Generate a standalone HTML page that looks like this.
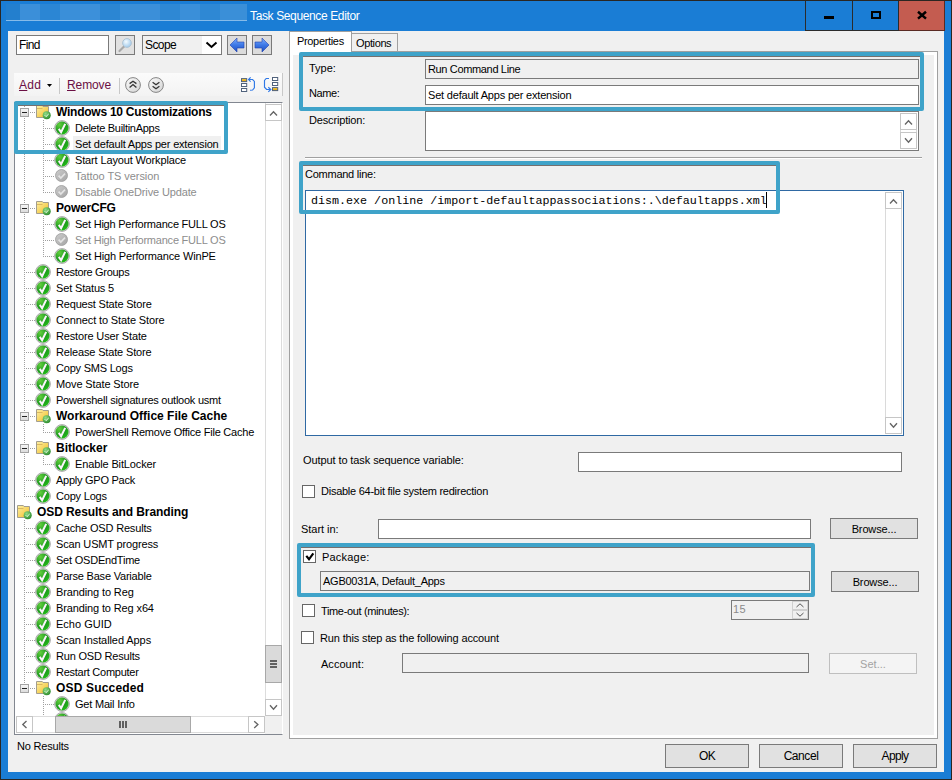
<!DOCTYPE html><html><head><meta charset="utf-8"><style>
html,body{margin:0;padding:0;}
body{width:952px;height:780px;position:relative;overflow:hidden;background:#2a2622;font-family:"Liberation Sans",sans-serif;}
.a{position:absolute;box-sizing:border-box;}
</style></head><body>
<div class="a" style="left:1px;top:1px;width:950px;height:778px;background:#1a7dd5;"></div>
<div class="a" style="left:6px;top:4px;width:14px;height:16px;background:#237fce;"></div>
<div class="a" style="left:20px;top:4px;width:20px;height:16px;background:#3b8fd9;"></div>
<div class="a" style="left:40px;top:4px;width:20px;height:16px;background:#2b86d4;"></div>
<div class="a" style="left:60px;top:4px;width:20px;height:16px;background:#3a8fd9;"></div>
<div class="a" style="left:80px;top:4px;width:20px;height:16px;background:#3c90da;"></div>
<div class="a" style="left:100px;top:4px;width:20px;height:16px;background:#2b86d3;"></div>
<div class="a" style="left:120px;top:4px;width:20px;height:16px;background:#3a8fd8;"></div>
<div class="a" style="left:140px;top:4px;width:20px;height:16px;background:#3b8fd9;"></div>
<div class="a" style="left:160px;top:4px;width:20px;height:16px;background:#2e88d4;"></div>
<div class="a" style="left:180px;top:4px;width:20px;height:16px;background:#3a8fd9;"></div>
<div class="a" style="left:200px;top:4px;width:20px;height:16px;background:#2e88d4;"></div>
<div class="a" style="left:220px;top:4px;width:20px;height:16px;background:#3a8fd8;"></div>
<div class="a" style="left:240px;top:4px;width:7px;height:16px;background:#3a8fd8;"></div>
<div class="a" style="left:6px;top:20px;width:241px;height:1px;background:#86bbe9;"></div>
<div class="a" style="left:250px;top:8.0px;height:16px;line-height:16px;font-size:12px;color:#fff;font-weight:normal;letter-spacing:-0.368px;font-family:'Liberation Sans';white-space:pre;">Task Sequence Editor</div>
<div class="a" style="left:805px;top:1px;width:1px;height:30px;background:#2b2b2b;"></div>
<div class="a" style="left:805px;top:30px;width:140px;height:1px;background:#2b2b2b;"></div>
<div class="a" style="left:852px;top:1px;width:1px;height:30px;background:#2b2b2b;"></div>
<div class="a" style="left:898px;top:1px;width:1px;height:30px;background:#2b2b2b;"></div>
<div class="a" style="left:899px;top:1px;width:45px;height:29px;background:#c45c50;"></div>
<div class="a" style="left:944px;top:1px;width:1px;height:30px;background:#5a2a24;"></div>
<div class="a" style="left:899px;top:30px;width:46px;height:1px;background:#5a2a24;"></div>
<div class="a" style="left:824px;top:16px;width:10px;height:3px;background:#000;"></div>
<div class="a" style="left:871px;top:11px;width:10px;height:8px;border:2px solid #000;"></div>
<svg class="a" style="left:916px;top:10px" width="12" height="10" viewBox="0 0 12 10"><path d="M2 1.8 L10 8.6 M10 1.8 L2 8.6" stroke="#000" stroke-width="2.5"/></svg>
<div class="a" style="left:8px;top:31px;width:936px;height:741px;background:#f0f0f0;"></div>
<div class="a" style="left:16px;top:35px;width:93px;height:20px;background:#fff;box-shadow:inset 0 0 0 1px #7a7a7a;"></div>
<div class="a" style="left:19px;top:37.0px;height:16px;line-height:16px;font-size:12px;color:#000;font-weight:normal;letter-spacing:-0.6px;font-family:'Liberation Sans';white-space:pre;">Find</div>
<div class="a" style="left:115px;top:35px;width:20px;height:20px;background:#e1e1e1;box-shadow:inset 0 0 0 1px #7a7a7a;"></div>
<svg class="a" style="left:117px;top:37px" width="16" height="16" viewBox="0 0 16 16">
<defs><radialGradient id="lens" cx="0.4" cy="0.35" r="0.7"><stop offset="0" stop-color="#f4fbff"/><stop offset="1" stop-color="#9cc7ea"/></radialGradient></defs>
<path d="M2.5 14 L7 9.5" stroke="#a8a8a8" stroke-width="2.2" stroke-linecap="round"/>
<circle cx="10" cy="6" r="4.4" fill="url(#lens)" stroke="#b0c4d4" stroke-width="1"/></svg>
<div class="a" style="left:142px;top:35px;width:80px;height:20px;background:#f0f0f0;box-shadow:inset 0 0 0 1px #7a7a7a;"></div>
<div class="a" style="left:202px;top:36px;width:19px;height:18px;background:#fff;"></div>
<div class="a" style="left:145px;top:37.0px;height:16px;line-height:16px;font-size:12px;color:#000;font-weight:normal;letter-spacing:-0.6px;font-family:'Liberation Sans';white-space:pre;">Scope</div>
<svg class="a" style="left:205px;top:41px" width="13" height="8" viewBox="0 0 13 8"><path d="M1.5 1.5 L6.5 6 L11.5 1.5" stroke="#000" stroke-width="2" fill="none"/></svg>
<div class="a" style="left:227px;top:35px;width:20px;height:20px;background:#dcdcdc;box-shadow:inset 0 0 0 1px #7a7a7a;"></div>
<div class="a" style="left:252px;top:35px;width:20px;height:20px;background:#dcdcdc;box-shadow:inset 0 0 0 1px #7a7a7a;"></div>
<svg class="a" style="left:229px;top:37px" width="17" height="16" viewBox="0 0 17 16">
<defs><linearGradient id="arw" x1="0" y1="0" x2="0" y2="1"><stop offset="0" stop-color="#7fb0ff"/><stop offset="0.5" stop-color="#3d78e6"/><stop offset="1" stop-color="#1f4fc0"/></linearGradient></defs>
<path d="M1 8 L8 1 L8 5 L15 5 L15 11 L8 11 L8 15 Z" fill="url(#arw)" stroke="#1e3fb0" stroke-width="0.6"/></svg>
<svg class="a" style="left:253px;top:37px" width="17" height="16" viewBox="0 0 17 16">
<path d="M16 8 L9 1 L9 5 L2 5 L2 11 L9 11 L9 15 Z" fill="url(#arw)" stroke="#1e3fb0" stroke-width="0.6"/></svg>
<div class="a" style="left:14px;top:73px;width:269px;height:23px;background:linear-gradient(#fbfbfb,#f3f3f3);border-right:1px solid #c8c8c8;"></div>
<div class="a" style="left:19px;top:77.0px;height:16px;line-height:16px;font-size:12px;color:#6b0f44;font-weight:normal;letter-spacing:0.3px;font-family:'Liberation Sans';white-space:pre;"><u>A</u>dd</div>
<svg class="a" style="left:47px;top:84px" width="5" height="3"><path d="M0 0 L5 0 L2.5 3Z" fill="#000"/></svg>
<div class="a" style="left:59px;top:78px;width:1px;height:16px;background:#c8c8c8;"></div>
<div class="a" style="left:67px;top:77.0px;height:16px;line-height:16px;font-size:12px;color:#6b0f44;font-weight:normal;letter-spacing:-0.1px;font-family:'Liberation Sans';white-space:pre;"><u>R</u>emove</div>
<div class="a" style="left:119px;top:78px;width:1px;height:16px;background:#c8c8c8;"></div>
<svg class="a" style="left:125px;top:77px" width="16" height="16" viewBox="0 0 16 16">
<defs><linearGradient id="cg125" x1="0" y1="0" x2="1" y2="1"><stop offset="0" stop-color="#fafafa"/><stop offset="1" stop-color="#d4d4d4"/></linearGradient></defs>
<circle cx="8" cy="8" r="7.4" fill="url(#cg125)" stroke="#858585" stroke-width="1"/>
<path d="M4.6 6.6 L8 4.2 L11.4 6.6 M4.6 10.6 L8 7.6 L11.4 10.6" stroke="#333" stroke-width="1.3" fill="none"/></svg>
<svg class="a" style="left:148px;top:77px" width="16" height="16" viewBox="0 0 16 16">
<defs><linearGradient id="cg148" x1="0" y1="0" x2="1" y2="1"><stop offset="0" stop-color="#fafafa"/><stop offset="1" stop-color="#d4d4d4"/></linearGradient></defs>
<circle cx="8" cy="8" r="7.4" fill="url(#cg148)" stroke="#858585" stroke-width="1"/>
<path d="M4.6 5.2 L8 7.8 L11.4 5.2 M4.6 9.2 L8 11.8 L11.4 9.2" stroke="#333" stroke-width="1.3" fill="none"/></svg>
<svg class="a" style="left:240px;top:76px" width="17" height="17" viewBox="0 0 17 17">
<defs><linearGradient id="gor" x1="0" y1="0" x2="0" y2="1"><stop offset="0" stop-color="#ffd84a"/><stop offset="1" stop-color="#e39a00"/></linearGradient></defs>
<rect x="1.5" y="2.6" width="5.2" height="3" fill="url(#gor)" stroke="#50627c" stroke-width="1"/>
<rect x="1.5" y="7.5" width="5.2" height="3" fill="#fff" stroke="#50627c" stroke-width="1"/>
<rect x="1.5" y="12.5" width="5.2" height="3" fill="#fff" stroke="#50627c" stroke-width="1"/>
<path d="M8.8 3.5 L12.6 3.5 L14.4 5.4 L14.4 11.9 L12.6 14 L10 14.2" stroke="#2f78e6" stroke-width="1.15" fill="none"/>
<path d="M10.6 1.3 L8.5 3.5 L10.6 5.7" stroke="#2f78e6" stroke-width="1.15" fill="none"/></svg>
<svg class="a" style="left:262px;top:76px" width="17" height="17" viewBox="0 0 17 17">
<rect x="10.5" y="1.5" width="5.2" height="3" fill="#fff" stroke="#50627c" stroke-width="1"/>
<rect x="10.5" y="6.5" width="5.2" height="3" fill="#fff" stroke="#50627c" stroke-width="1"/>
<rect x="10.5" y="11.6" width="5.2" height="3" fill="url(#gor)" stroke="#50627c" stroke-width="1"/>
<path d="M7 2.5 L4.2 2.5 L2.5 4.5 L2.5 11.2 L4.6 13.5 L8.6 13.5" stroke="#2f78e6" stroke-width="1.15" fill="none"/>
<path d="M6.3 11.3 L8.8 13.5 L6.3 15.8" stroke="#2f78e6" stroke-width="1.15" fill="none"/></svg>
<div class="a" style="left:14px;top:102px;width:269px;height:633px;background:#fff;border:1px solid #828790;border-right:1px solid #fff;"></div>
<svg width="0" height="0" style="position:absolute"><defs>
<radialGradient id="gck" cx="0.3" cy="0.25" r="0.85"><stop offset="0" stop-color="#62cf3e"/><stop offset="0.6" stop-color="#1f9a1f"/><stop offset="1" stop-color="#22c414"/></radialGradient>
<linearGradient id="gdis" x1="0" y1="0" x2="1" y2="1"><stop offset="0" stop-color="#cdcdcd"/><stop offset="1" stop-color="#a4a4a4"/></linearGradient>
<linearGradient id="gfold" x1="0" y1="0" x2="1" y2="1"><stop offset="0" stop-color="#fdf0a8"/><stop offset="0.6" stop-color="#f7d25a"/><stop offset="1" stop-color="#eaa820"/></linearGradient>
<radialGradient id="gbadge" cx="0.35" cy="0.3" r="0.75"><stop offset="0" stop-color="#92dc86"/><stop offset="1" stop-color="#2a8a2a"/></radialGradient>
</defs></svg>
<div class="a" style="left:24px;top:104px;width:1px;height:393px;background:repeating-linear-gradient(to bottom,#a0a0a0 0 1px,transparent 1px 2px);"></div>
<div class="a" style="left:24px;top:520px;width:1px;height:169px;background:repeating-linear-gradient(to bottom,#a0a0a0 0 1px,transparent 1px 2px);"></div>
<div class="a" style="left:43px;top:120px;width:1px;height:73px;background:repeating-linear-gradient(to bottom,#a0a0a0 0 1px,transparent 1px 2px);"></div>
<div class="a" style="left:43px;top:216px;width:1px;height:41px;background:repeating-linear-gradient(to bottom,#a0a0a0 0 1px,transparent 1px 2px);"></div>
<div class="a" style="left:43px;top:424px;width:1px;height:9px;background:repeating-linear-gradient(to bottom,#a0a0a0 0 1px,transparent 1px 2px);"></div>
<div class="a" style="left:43px;top:456px;width:1px;height:9px;background:repeating-linear-gradient(to bottom,#a0a0a0 0 1px,transparent 1px 2px);"></div>
<div class="a" style="left:43px;top:696px;width:1px;height:20px;background:repeating-linear-gradient(to bottom,#a0a0a0 0 1px,transparent 1px 2px);"></div>
<div class="a" style="left:30px;top:112px;width:6px;height:1px;background:repeating-linear-gradient(to right,#a0a0a0 0 1px,transparent 1px 2px);"></div>
<svg class="a" style="left:36px;top:104px" width="16" height="16" viewBox="0 0 16 16">
<path d="M0.5 1.5 L6.3 1.5 L7 2.5 L12.5 2.5 L12.5 13.5 L0.5 13.5 Z" fill="url(#gfold)" stroke="#a39e8e" stroke-width="1"/>
<path d="M1 4.5 L6.5 4.5" stroke="#d9b860" stroke-width="1"/>
<circle cx="10.7" cy="11.3" r="4" fill="url(#gbadge)"/>
<path d="M8.7 11.2 L10 12.6 L12.7 10" stroke="#e8ffe8" stroke-width="1" fill="none"/></svg>
<div class="a" style="left:20px;top:108px;width:9px;height:9px;border:1px solid #a3a3a3;background:linear-gradient(#f6f6f6,#dcdcdc);"></div><div class="a" style="left:22px;top:112px;width:5px;height:1px;background:#222;"></div>
<div class="a" style="left:56px;top:104.0px;height:16px;line-height:16px;font-size:12px;color:#000;font-weight:bold;letter-spacing:-0.25px;font-family:'Liberation Sans';white-space:pre;">Windows 10 Customizations</div>
<div class="a" style="left:45px;top:128px;width:9px;height:1px;background:repeating-linear-gradient(to right,#a0a0a0 0 1px,transparent 1px 2px);"></div>
<svg class="a" style="left:54px;top:120px" width="16" height="16" viewBox="0 0 16 16">
<circle cx="8" cy="8" r="7.4" fill="#d2d2d2" stroke="#a6a6a6" stroke-width="0.9"/>
<circle cx="8" cy="8" r="6.5" fill="url(#gck)"/>
<path d="M4.8 8.9 L7.1 12.3 L11.2 3.9" stroke="#fbf4fb" stroke-width="2" fill="none"/></svg>
<div class="a" style="left:75px;top:120.0px;height:16px;line-height:16px;font-size:11px;color:#000;font-weight:normal;letter-spacing:-0.294px;font-family:'Liberation Sans';white-space:pre;">Delete BuiltinApps</div>
<div class="a" style="left:45px;top:144px;width:9px;height:1px;background:repeating-linear-gradient(to right,#a0a0a0 0 1px,transparent 1px 2px);"></div>
<svg class="a" style="left:54px;top:136px" width="16" height="16" viewBox="0 0 16 16">
<circle cx="8" cy="8" r="7.4" fill="#d2d2d2" stroke="#a6a6a6" stroke-width="0.9"/>
<circle cx="8" cy="8" r="6.5" fill="url(#gck)"/>
<path d="M4.8 8.9 L7.1 12.3 L11.2 3.9" stroke="#fbf4fb" stroke-width="2" fill="none"/></svg>
<div class="a" style="left:73px;top:136px;width:148px;height:14px;background:#f0f0f0;"></div>
<div class="a" style="left:75px;top:136.0px;height:16px;line-height:16px;font-size:11px;color:#000;font-weight:normal;letter-spacing:-0.19px;font-family:'Liberation Sans';white-space:pre;">Set default Apps per extension</div>
<div class="a" style="left:45px;top:160px;width:9px;height:1px;background:repeating-linear-gradient(to right,#a0a0a0 0 1px,transparent 1px 2px);"></div>
<svg class="a" style="left:54px;top:152px" width="16" height="16" viewBox="0 0 16 16">
<circle cx="8" cy="8" r="7.4" fill="#d2d2d2" stroke="#a6a6a6" stroke-width="0.9"/>
<circle cx="8" cy="8" r="6.5" fill="url(#gck)"/>
<path d="M4.8 8.9 L7.1 12.3 L11.2 3.9" stroke="#fbf4fb" stroke-width="2" fill="none"/></svg>
<div class="a" style="left:75px;top:152.0px;height:16px;line-height:16px;font-size:11px;color:#000;font-weight:normal;letter-spacing:-0.143px;font-family:'Liberation Sans';white-space:pre;">Start Layout Workplace</div>
<div class="a" style="left:45px;top:176px;width:9px;height:1px;background:repeating-linear-gradient(to right,#a0a0a0 0 1px,transparent 1px 2px);"></div>
<svg class="a" style="left:54px;top:168px" width="16" height="16" viewBox="0 0 16 16">
<circle cx="7.5" cy="7.5" r="6" fill="url(#gdis)" stroke="#9a9a9a" stroke-width="0.8"/>
<path d="M4.6 7.6 L6.8 10 L11 5.6" stroke="#e4e4e4" stroke-width="1.7" fill="none"/></svg>
<div class="a" style="left:75px;top:168.0px;height:16px;line-height:16px;font-size:11px;color:#8d8d8d;font-weight:normal;letter-spacing:-0.062px;font-family:'Liberation Sans';white-space:pre;">Tattoo TS version</div>
<div class="a" style="left:45px;top:192px;width:9px;height:1px;background:repeating-linear-gradient(to right,#a0a0a0 0 1px,transparent 1px 2px);"></div>
<svg class="a" style="left:54px;top:184px" width="16" height="16" viewBox="0 0 16 16">
<circle cx="7.5" cy="7.5" r="6" fill="url(#gdis)" stroke="#9a9a9a" stroke-width="0.8"/>
<path d="M4.6 7.6 L6.8 10 L11 5.6" stroke="#e4e4e4" stroke-width="1.7" fill="none"/></svg>
<div class="a" style="left:75px;top:184.0px;height:16px;line-height:16px;font-size:11px;color:#8d8d8d;font-weight:normal;letter-spacing:-0.136px;font-family:'Liberation Sans';white-space:pre;">Disable OneDrive Update</div>
<div class="a" style="left:30px;top:208px;width:6px;height:1px;background:repeating-linear-gradient(to right,#a0a0a0 0 1px,transparent 1px 2px);"></div>
<svg class="a" style="left:36px;top:200px" width="16" height="16" viewBox="0 0 16 16">
<path d="M0.5 1.5 L6.3 1.5 L7 2.5 L12.5 2.5 L12.5 13.5 L0.5 13.5 Z" fill="url(#gfold)" stroke="#a39e8e" stroke-width="1"/>
<path d="M1 4.5 L6.5 4.5" stroke="#d9b860" stroke-width="1"/>
<circle cx="10.7" cy="11.3" r="4" fill="url(#gbadge)"/>
<path d="M8.7 11.2 L10 12.6 L12.7 10" stroke="#e8ffe8" stroke-width="1" fill="none"/></svg>
<div class="a" style="left:20px;top:204px;width:9px;height:9px;border:1px solid #a3a3a3;background:linear-gradient(#f6f6f6,#dcdcdc);"></div><div class="a" style="left:22px;top:208px;width:5px;height:1px;background:#222;"></div>
<div class="a" style="left:56px;top:200.0px;height:16px;line-height:16px;font-size:12px;color:#000;font-weight:bold;letter-spacing:-0.214px;font-family:'Liberation Sans';white-space:pre;">PowerCFG</div>
<div class="a" style="left:45px;top:224px;width:9px;height:1px;background:repeating-linear-gradient(to right,#a0a0a0 0 1px,transparent 1px 2px);"></div>
<svg class="a" style="left:54px;top:216px" width="16" height="16" viewBox="0 0 16 16">
<circle cx="8" cy="8" r="7.4" fill="#d2d2d2" stroke="#a6a6a6" stroke-width="0.9"/>
<circle cx="8" cy="8" r="6.5" fill="url(#gck)"/>
<path d="M4.8 8.9 L7.1 12.3 L11.2 3.9" stroke="#fbf4fb" stroke-width="2" fill="none"/></svg>
<div class="a" style="left:75px;top:216.0px;height:16px;line-height:16px;font-size:11px;color:#000;font-weight:normal;letter-spacing:-0.222px;font-family:'Liberation Sans';white-space:pre;">Set High Performance FULL OS</div>
<div class="a" style="left:45px;top:240px;width:9px;height:1px;background:repeating-linear-gradient(to right,#a0a0a0 0 1px,transparent 1px 2px);"></div>
<svg class="a" style="left:54px;top:232px" width="16" height="16" viewBox="0 0 16 16">
<circle cx="7.5" cy="7.5" r="6" fill="url(#gdis)" stroke="#9a9a9a" stroke-width="0.8"/>
<path d="M4.6 7.6 L6.8 10 L11 5.6" stroke="#e4e4e4" stroke-width="1.7" fill="none"/></svg>
<div class="a" style="left:75px;top:232.0px;height:16px;line-height:16px;font-size:11px;color:#8d8d8d;font-weight:normal;letter-spacing:-0.222px;font-family:'Liberation Sans';white-space:pre;">Set High Performance FULL OS</div>
<div class="a" style="left:45px;top:256px;width:9px;height:1px;background:repeating-linear-gradient(to right,#a0a0a0 0 1px,transparent 1px 2px);"></div>
<svg class="a" style="left:54px;top:248px" width="16" height="16" viewBox="0 0 16 16">
<circle cx="8" cy="8" r="7.4" fill="#d2d2d2" stroke="#a6a6a6" stroke-width="0.9"/>
<circle cx="8" cy="8" r="6.5" fill="url(#gck)"/>
<path d="M4.8 8.9 L7.1 12.3 L11.2 3.9" stroke="#fbf4fb" stroke-width="2" fill="none"/></svg>
<div class="a" style="left:75px;top:248.0px;height:16px;line-height:16px;font-size:11px;color:#000;font-weight:normal;letter-spacing:-0.16px;font-family:'Liberation Sans';white-space:pre;">Set High Performance WinPE</div>
<div class="a" style="left:26px;top:272px;width:9px;height:1px;background:repeating-linear-gradient(to right,#a0a0a0 0 1px,transparent 1px 2px);"></div>
<svg class="a" style="left:35px;top:264px" width="16" height="16" viewBox="0 0 16 16">
<circle cx="8" cy="8" r="7.4" fill="#d2d2d2" stroke="#a6a6a6" stroke-width="0.9"/>
<circle cx="8" cy="8" r="6.5" fill="url(#gck)"/>
<path d="M4.8 8.9 L7.1 12.3 L11.2 3.9" stroke="#fbf4fb" stroke-width="2" fill="none"/></svg>
<div class="a" style="left:56px;top:264.0px;height:16px;line-height:16px;font-size:11px;color:#000;font-weight:normal;letter-spacing:-0.308px;font-family:'Liberation Sans';white-space:pre;">Restore Groups</div>
<div class="a" style="left:26px;top:288px;width:9px;height:1px;background:repeating-linear-gradient(to right,#a0a0a0 0 1px,transparent 1px 2px);"></div>
<svg class="a" style="left:35px;top:280px" width="16" height="16" viewBox="0 0 16 16">
<circle cx="8" cy="8" r="7.4" fill="#d2d2d2" stroke="#a6a6a6" stroke-width="0.9"/>
<circle cx="8" cy="8" r="6.5" fill="url(#gck)"/>
<path d="M4.8 8.9 L7.1 12.3 L11.2 3.9" stroke="#fbf4fb" stroke-width="2" fill="none"/></svg>
<div class="a" style="left:56px;top:280.0px;height:16px;line-height:16px;font-size:11px;color:#000;font-weight:normal;letter-spacing:-0.155px;font-family:'Liberation Sans';white-space:pre;">Set Status 5</div>
<div class="a" style="left:26px;top:304px;width:9px;height:1px;background:repeating-linear-gradient(to right,#a0a0a0 0 1px,transparent 1px 2px);"></div>
<svg class="a" style="left:35px;top:296px" width="16" height="16" viewBox="0 0 16 16">
<circle cx="8" cy="8" r="7.4" fill="#d2d2d2" stroke="#a6a6a6" stroke-width="0.9"/>
<circle cx="8" cy="8" r="6.5" fill="url(#gck)"/>
<path d="M4.8 8.9 L7.1 12.3 L11.2 3.9" stroke="#fbf4fb" stroke-width="2" fill="none"/></svg>
<div class="a" style="left:56px;top:296.0px;height:16px;line-height:16px;font-size:11px;color:#000;font-weight:normal;letter-spacing:-0.183px;font-family:'Liberation Sans';white-space:pre;">Request State Store</div>
<div class="a" style="left:26px;top:320px;width:9px;height:1px;background:repeating-linear-gradient(to right,#a0a0a0 0 1px,transparent 1px 2px);"></div>
<svg class="a" style="left:35px;top:312px" width="16" height="16" viewBox="0 0 16 16">
<circle cx="8" cy="8" r="7.4" fill="#d2d2d2" stroke="#a6a6a6" stroke-width="0.9"/>
<circle cx="8" cy="8" r="6.5" fill="url(#gck)"/>
<path d="M4.8 8.9 L7.1 12.3 L11.2 3.9" stroke="#fbf4fb" stroke-width="2" fill="none"/></svg>
<div class="a" style="left:56px;top:312.0px;height:16px;line-height:16px;font-size:11px;color:#000;font-weight:normal;letter-spacing:-0.129px;font-family:'Liberation Sans';white-space:pre;">Connect to State Store</div>
<div class="a" style="left:26px;top:336px;width:9px;height:1px;background:repeating-linear-gradient(to right,#a0a0a0 0 1px,transparent 1px 2px);"></div>
<svg class="a" style="left:35px;top:328px" width="16" height="16" viewBox="0 0 16 16">
<circle cx="8" cy="8" r="7.4" fill="#d2d2d2" stroke="#a6a6a6" stroke-width="0.9"/>
<circle cx="8" cy="8" r="6.5" fill="url(#gck)"/>
<path d="M4.8 8.9 L7.1 12.3 L11.2 3.9" stroke="#fbf4fb" stroke-width="2" fill="none"/></svg>
<div class="a" style="left:56px;top:328.0px;height:16px;line-height:16px;font-size:11px;color:#000;font-weight:normal;letter-spacing:-0.153px;font-family:'Liberation Sans';white-space:pre;">Restore User State</div>
<div class="a" style="left:26px;top:352px;width:9px;height:1px;background:repeating-linear-gradient(to right,#a0a0a0 0 1px,transparent 1px 2px);"></div>
<svg class="a" style="left:35px;top:344px" width="16" height="16" viewBox="0 0 16 16">
<circle cx="8" cy="8" r="7.4" fill="#d2d2d2" stroke="#a6a6a6" stroke-width="0.9"/>
<circle cx="8" cy="8" r="6.5" fill="url(#gck)"/>
<path d="M4.8 8.9 L7.1 12.3 L11.2 3.9" stroke="#fbf4fb" stroke-width="2" fill="none"/></svg>
<div class="a" style="left:56px;top:344.0px;height:16px;line-height:16px;font-size:11px;color:#000;font-weight:normal;letter-spacing:-0.156px;font-family:'Liberation Sans';white-space:pre;">Release State Store</div>
<div class="a" style="left:26px;top:368px;width:9px;height:1px;background:repeating-linear-gradient(to right,#a0a0a0 0 1px,transparent 1px 2px);"></div>
<svg class="a" style="left:35px;top:360px" width="16" height="16" viewBox="0 0 16 16">
<circle cx="8" cy="8" r="7.4" fill="#d2d2d2" stroke="#a6a6a6" stroke-width="0.9"/>
<circle cx="8" cy="8" r="6.5" fill="url(#gck)"/>
<path d="M4.8 8.9 L7.1 12.3 L11.2 3.9" stroke="#fbf4fb" stroke-width="2" fill="none"/></svg>
<div class="a" style="left:56px;top:360.0px;height:16px;line-height:16px;font-size:11px;color:#000;font-weight:normal;letter-spacing:-0.217px;font-family:'Liberation Sans';white-space:pre;">Copy SMS Logs</div>
<div class="a" style="left:26px;top:384px;width:9px;height:1px;background:repeating-linear-gradient(to right,#a0a0a0 0 1px,transparent 1px 2px);"></div>
<svg class="a" style="left:35px;top:376px" width="16" height="16" viewBox="0 0 16 16">
<circle cx="8" cy="8" r="7.4" fill="#d2d2d2" stroke="#a6a6a6" stroke-width="0.9"/>
<circle cx="8" cy="8" r="6.5" fill="url(#gck)"/>
<path d="M4.8 8.9 L7.1 12.3 L11.2 3.9" stroke="#fbf4fb" stroke-width="2" fill="none"/></svg>
<div class="a" style="left:56px;top:376.0px;height:16px;line-height:16px;font-size:11px;color:#000;font-weight:normal;letter-spacing:-0.127px;font-family:'Liberation Sans';white-space:pre;">Move State Store</div>
<div class="a" style="left:26px;top:400px;width:9px;height:1px;background:repeating-linear-gradient(to right,#a0a0a0 0 1px,transparent 1px 2px);"></div>
<svg class="a" style="left:35px;top:392px" width="16" height="16" viewBox="0 0 16 16">
<circle cx="8" cy="8" r="7.4" fill="#d2d2d2" stroke="#a6a6a6" stroke-width="0.9"/>
<circle cx="8" cy="8" r="6.5" fill="url(#gck)"/>
<path d="M4.8 8.9 L7.1 12.3 L11.2 3.9" stroke="#fbf4fb" stroke-width="2" fill="none"/></svg>
<div class="a" style="left:56px;top:392.0px;height:16px;line-height:16px;font-size:11px;color:#000;font-weight:normal;letter-spacing:-0.242px;font-family:'Liberation Sans';white-space:pre;">Powershell signatures outlook usmt</div>
<div class="a" style="left:30px;top:416px;width:6px;height:1px;background:repeating-linear-gradient(to right,#a0a0a0 0 1px,transparent 1px 2px);"></div>
<svg class="a" style="left:36px;top:408px" width="16" height="16" viewBox="0 0 16 16">
<path d="M0.5 1.5 L6.3 1.5 L7 2.5 L12.5 2.5 L12.5 13.5 L0.5 13.5 Z" fill="url(#gfold)" stroke="#a39e8e" stroke-width="1"/>
<path d="M1 4.5 L6.5 4.5" stroke="#d9b860" stroke-width="1"/>
<circle cx="10.7" cy="11.3" r="4" fill="url(#gbadge)"/>
<path d="M8.7 11.2 L10 12.6 L12.7 10" stroke="#e8ffe8" stroke-width="1" fill="none"/></svg>
<div class="a" style="left:20px;top:412px;width:9px;height:9px;border:1px solid #a3a3a3;background:linear-gradient(#f6f6f6,#dcdcdc);"></div><div class="a" style="left:22px;top:416px;width:5px;height:1px;background:#222;"></div>
<div class="a" style="left:56px;top:408.0px;height:16px;line-height:16px;font-size:12px;color:#000;font-weight:bold;letter-spacing:0.0px;font-family:'Liberation Sans';white-space:pre;">Workaround Office File Cache</div>
<div class="a" style="left:45px;top:432px;width:9px;height:1px;background:repeating-linear-gradient(to right,#a0a0a0 0 1px,transparent 1px 2px);"></div>
<svg class="a" style="left:54px;top:424px" width="16" height="16" viewBox="0 0 16 16">
<circle cx="8" cy="8" r="7.4" fill="#d2d2d2" stroke="#a6a6a6" stroke-width="0.9"/>
<circle cx="8" cy="8" r="6.5" fill="url(#gck)"/>
<path d="M4.8 8.9 L7.1 12.3 L11.2 3.9" stroke="#fbf4fb" stroke-width="2" fill="none"/></svg>
<div class="a" style="left:75px;top:424.0px;height:16px;line-height:16px;font-size:11px;color:#000;font-weight:normal;letter-spacing:-0.224px;font-family:'Liberation Sans';white-space:pre;">PowerShell Remove Office File Cache</div>
<div class="a" style="left:30px;top:448px;width:6px;height:1px;background:repeating-linear-gradient(to right,#a0a0a0 0 1px,transparent 1px 2px);"></div>
<svg class="a" style="left:36px;top:440px" width="16" height="16" viewBox="0 0 16 16">
<path d="M0.5 1.5 L6.3 1.5 L7 2.5 L12.5 2.5 L12.5 13.5 L0.5 13.5 Z" fill="url(#gfold)" stroke="#a39e8e" stroke-width="1"/>
<path d="M1 4.5 L6.5 4.5" stroke="#d9b860" stroke-width="1"/>
<circle cx="10.7" cy="11.3" r="4" fill="url(#gbadge)"/>
<path d="M8.7 11.2 L10 12.6 L12.7 10" stroke="#e8ffe8" stroke-width="1" fill="none"/></svg>
<div class="a" style="left:20px;top:444px;width:9px;height:9px;border:1px solid #a3a3a3;background:linear-gradient(#f6f6f6,#dcdcdc);"></div><div class="a" style="left:22px;top:448px;width:5px;height:1px;background:#222;"></div>
<div class="a" style="left:56px;top:440.0px;height:16px;line-height:16px;font-size:12px;color:#000;font-weight:bold;letter-spacing:0.0px;font-family:'Liberation Sans';white-space:pre;">Bitlocker</div>
<div class="a" style="left:45px;top:464px;width:9px;height:1px;background:repeating-linear-gradient(to right,#a0a0a0 0 1px,transparent 1px 2px);"></div>
<svg class="a" style="left:54px;top:456px" width="16" height="16" viewBox="0 0 16 16">
<circle cx="8" cy="8" r="7.4" fill="#d2d2d2" stroke="#a6a6a6" stroke-width="0.9"/>
<circle cx="8" cy="8" r="6.5" fill="url(#gck)"/>
<path d="M4.8 8.9 L7.1 12.3 L11.2 3.9" stroke="#fbf4fb" stroke-width="2" fill="none"/></svg>
<div class="a" style="left:75px;top:456.0px;height:16px;line-height:16px;font-size:11px;color:#000;font-weight:normal;letter-spacing:-0.133px;font-family:'Liberation Sans';white-space:pre;">Enable BitLocker</div>
<div class="a" style="left:26px;top:480px;width:9px;height:1px;background:repeating-linear-gradient(to right,#a0a0a0 0 1px,transparent 1px 2px);"></div>
<svg class="a" style="left:35px;top:472px" width="16" height="16" viewBox="0 0 16 16">
<circle cx="8" cy="8" r="7.4" fill="#d2d2d2" stroke="#a6a6a6" stroke-width="0.9"/>
<circle cx="8" cy="8" r="6.5" fill="url(#gck)"/>
<path d="M4.8 8.9 L7.1 12.3 L11.2 3.9" stroke="#fbf4fb" stroke-width="2" fill="none"/></svg>
<div class="a" style="left:56px;top:472.0px;height:16px;line-height:16px;font-size:11px;color:#000;font-weight:normal;letter-spacing:-0.254px;font-family:'Liberation Sans';white-space:pre;">Apply GPO Pack</div>
<div class="a" style="left:26px;top:496px;width:9px;height:1px;background:repeating-linear-gradient(to right,#a0a0a0 0 1px,transparent 1px 2px);"></div>
<svg class="a" style="left:35px;top:488px" width="16" height="16" viewBox="0 0 16 16">
<circle cx="8" cy="8" r="7.4" fill="#d2d2d2" stroke="#a6a6a6" stroke-width="0.9"/>
<circle cx="8" cy="8" r="6.5" fill="url(#gck)"/>
<path d="M4.8 8.9 L7.1 12.3 L11.2 3.9" stroke="#fbf4fb" stroke-width="2" fill="none"/></svg>
<div class="a" style="left:56px;top:488.0px;height:16px;line-height:16px;font-size:11px;color:#000;font-weight:normal;letter-spacing:-0.2px;font-family:'Liberation Sans';white-space:pre;">Copy Logs</div>
<svg class="a" style="left:17px;top:504px" width="16" height="16" viewBox="0 0 16 16">
<path d="M0.5 1.5 L6.3 1.5 L7 2.5 L12.5 2.5 L12.5 13.5 L0.5 13.5 Z" fill="url(#gfold)" stroke="#a39e8e" stroke-width="1"/>
<path d="M1 4.5 L6.5 4.5" stroke="#d9b860" stroke-width="1"/>
<circle cx="10.7" cy="11.3" r="4" fill="url(#gbadge)"/>
<path d="M8.7 11.2 L10 12.6 L12.7 10" stroke="#e8ffe8" stroke-width="1" fill="none"/></svg>
<div class="a" style="left:37px;top:504.0px;height:16px;line-height:16px;font-size:12px;color:#000;font-weight:bold;letter-spacing:-0.087px;font-family:'Liberation Sans';white-space:pre;">OSD Results and Branding</div>
<div class="a" style="left:26px;top:528px;width:9px;height:1px;background:repeating-linear-gradient(to right,#a0a0a0 0 1px,transparent 1px 2px);"></div>
<svg class="a" style="left:35px;top:520px" width="16" height="16" viewBox="0 0 16 16">
<circle cx="8" cy="8" r="7.4" fill="#d2d2d2" stroke="#a6a6a6" stroke-width="0.9"/>
<circle cx="8" cy="8" r="6.5" fill="url(#gck)"/>
<path d="M4.8 8.9 L7.1 12.3 L11.2 3.9" stroke="#fbf4fb" stroke-width="2" fill="none"/></svg>
<div class="a" style="left:56px;top:520.0px;height:16px;line-height:16px;font-size:11px;color:#000;font-weight:normal;letter-spacing:-0.162px;font-family:'Liberation Sans';white-space:pre;">Cache OSD Results</div>
<div class="a" style="left:26px;top:544px;width:9px;height:1px;background:repeating-linear-gradient(to right,#a0a0a0 0 1px,transparent 1px 2px);"></div>
<svg class="a" style="left:35px;top:536px" width="16" height="16" viewBox="0 0 16 16">
<circle cx="8" cy="8" r="7.4" fill="#d2d2d2" stroke="#a6a6a6" stroke-width="0.9"/>
<circle cx="8" cy="8" r="6.5" fill="url(#gck)"/>
<path d="M4.8 8.9 L7.1 12.3 L11.2 3.9" stroke="#fbf4fb" stroke-width="2" fill="none"/></svg>
<div class="a" style="left:56px;top:536.0px;height:16px;line-height:16px;font-size:11px;color:#000;font-weight:normal;letter-spacing:-0.153px;font-family:'Liberation Sans';white-space:pre;">Scan USMT progress</div>
<div class="a" style="left:26px;top:560px;width:9px;height:1px;background:repeating-linear-gradient(to right,#a0a0a0 0 1px,transparent 1px 2px);"></div>
<svg class="a" style="left:35px;top:552px" width="16" height="16" viewBox="0 0 16 16">
<circle cx="8" cy="8" r="7.4" fill="#d2d2d2" stroke="#a6a6a6" stroke-width="0.9"/>
<circle cx="8" cy="8" r="6.5" fill="url(#gck)"/>
<path d="M4.8 8.9 L7.1 12.3 L11.2 3.9" stroke="#fbf4fb" stroke-width="2" fill="none"/></svg>
<div class="a" style="left:56px;top:552.0px;height:16px;line-height:16px;font-size:11px;color:#000;font-weight:normal;letter-spacing:-0.215px;font-family:'Liberation Sans';white-space:pre;">Set OSDEndTime</div>
<div class="a" style="left:26px;top:576px;width:9px;height:1px;background:repeating-linear-gradient(to right,#a0a0a0 0 1px,transparent 1px 2px);"></div>
<svg class="a" style="left:35px;top:568px" width="16" height="16" viewBox="0 0 16 16">
<circle cx="8" cy="8" r="7.4" fill="#d2d2d2" stroke="#a6a6a6" stroke-width="0.9"/>
<circle cx="8" cy="8" r="6.5" fill="url(#gck)"/>
<path d="M4.8 8.9 L7.1 12.3 L11.2 3.9" stroke="#fbf4fb" stroke-width="2" fill="none"/></svg>
<div class="a" style="left:56px;top:568.0px;height:16px;line-height:16px;font-size:11px;color:#000;font-weight:normal;letter-spacing:-0.206px;font-family:'Liberation Sans';white-space:pre;">Parse Base Variable</div>
<div class="a" style="left:26px;top:592px;width:9px;height:1px;background:repeating-linear-gradient(to right,#a0a0a0 0 1px,transparent 1px 2px);"></div>
<svg class="a" style="left:35px;top:584px" width="16" height="16" viewBox="0 0 16 16">
<circle cx="8" cy="8" r="7.4" fill="#d2d2d2" stroke="#a6a6a6" stroke-width="0.9"/>
<circle cx="8" cy="8" r="6.5" fill="url(#gck)"/>
<path d="M4.8 8.9 L7.1 12.3 L11.2 3.9" stroke="#fbf4fb" stroke-width="2" fill="none"/></svg>
<div class="a" style="left:56px;top:584.0px;height:16px;line-height:16px;font-size:11px;color:#000;font-weight:normal;letter-spacing:-0.121px;font-family:'Liberation Sans';white-space:pre;">Branding to Reg</div>
<div class="a" style="left:26px;top:608px;width:9px;height:1px;background:repeating-linear-gradient(to right,#a0a0a0 0 1px,transparent 1px 2px);"></div>
<svg class="a" style="left:35px;top:600px" width="16" height="16" viewBox="0 0 16 16">
<circle cx="8" cy="8" r="7.4" fill="#d2d2d2" stroke="#a6a6a6" stroke-width="0.9"/>
<circle cx="8" cy="8" r="6.5" fill="url(#gck)"/>
<path d="M4.8 8.9 L7.1 12.3 L11.2 3.9" stroke="#fbf4fb" stroke-width="2" fill="none"/></svg>
<div class="a" style="left:56px;top:600.0px;height:16px;line-height:16px;font-size:11px;color:#000;font-weight:normal;letter-spacing:-0.128px;font-family:'Liberation Sans';white-space:pre;">Branding to Reg x64</div>
<div class="a" style="left:26px;top:624px;width:9px;height:1px;background:repeating-linear-gradient(to right,#a0a0a0 0 1px,transparent 1px 2px);"></div>
<svg class="a" style="left:35px;top:616px" width="16" height="16" viewBox="0 0 16 16">
<circle cx="8" cy="8" r="7.4" fill="#d2d2d2" stroke="#a6a6a6" stroke-width="0.9"/>
<circle cx="8" cy="8" r="6.5" fill="url(#gck)"/>
<path d="M4.8 8.9 L7.1 12.3 L11.2 3.9" stroke="#fbf4fb" stroke-width="2" fill="none"/></svg>
<div class="a" style="left:56px;top:616.0px;height:16px;line-height:16px;font-size:11px;color:#000;font-weight:normal;letter-spacing:0.0px;font-family:'Liberation Sans';white-space:pre;">Echo GUID</div>
<div class="a" style="left:26px;top:640px;width:9px;height:1px;background:repeating-linear-gradient(to right,#a0a0a0 0 1px,transparent 1px 2px);"></div>
<svg class="a" style="left:35px;top:632px" width="16" height="16" viewBox="0 0 16 16">
<circle cx="8" cy="8" r="7.4" fill="#d2d2d2" stroke="#a6a6a6" stroke-width="0.9"/>
<circle cx="8" cy="8" r="6.5" fill="url(#gck)"/>
<path d="M4.8 8.9 L7.1 12.3 L11.2 3.9" stroke="#fbf4fb" stroke-width="2" fill="none"/></svg>
<div class="a" style="left:56px;top:632.0px;height:16px;line-height:16px;font-size:11px;color:#000;font-weight:normal;letter-spacing:-0.083px;font-family:'Liberation Sans';white-space:pre;">Scan Installed Apps</div>
<div class="a" style="left:26px;top:656px;width:9px;height:1px;background:repeating-linear-gradient(to right,#a0a0a0 0 1px,transparent 1px 2px);"></div>
<svg class="a" style="left:35px;top:648px" width="16" height="16" viewBox="0 0 16 16">
<circle cx="8" cy="8" r="7.4" fill="#d2d2d2" stroke="#a6a6a6" stroke-width="0.9"/>
<circle cx="8" cy="8" r="6.5" fill="url(#gck)"/>
<path d="M4.8 8.9 L7.1 12.3 L11.2 3.9" stroke="#fbf4fb" stroke-width="2" fill="none"/></svg>
<div class="a" style="left:56px;top:648.0px;height:16px;line-height:16px;font-size:11px;color:#000;font-weight:normal;letter-spacing:-0.2px;font-family:'Liberation Sans';white-space:pre;">Run OSD Results</div>
<div class="a" style="left:26px;top:672px;width:9px;height:1px;background:repeating-linear-gradient(to right,#a0a0a0 0 1px,transparent 1px 2px);"></div>
<svg class="a" style="left:35px;top:664px" width="16" height="16" viewBox="0 0 16 16">
<circle cx="8" cy="8" r="7.4" fill="#d2d2d2" stroke="#a6a6a6" stroke-width="0.9"/>
<circle cx="8" cy="8" r="6.5" fill="url(#gck)"/>
<path d="M4.8 8.9 L7.1 12.3 L11.2 3.9" stroke="#fbf4fb" stroke-width="2" fill="none"/></svg>
<div class="a" style="left:56px;top:664.0px;height:16px;line-height:16px;font-size:11px;color:#000;font-weight:normal;letter-spacing:-0.267px;font-family:'Liberation Sans';white-space:pre;">Restart Computer</div>
<div class="a" style="left:30px;top:688px;width:6px;height:1px;background:repeating-linear-gradient(to right,#a0a0a0 0 1px,transparent 1px 2px);"></div>
<svg class="a" style="left:36px;top:680px" width="16" height="16" viewBox="0 0 16 16">
<path d="M0.5 1.5 L6.3 1.5 L7 2.5 L12.5 2.5 L12.5 13.5 L0.5 13.5 Z" fill="url(#gfold)" stroke="#a39e8e" stroke-width="1"/>
<path d="M1 4.5 L6.5 4.5" stroke="#d9b860" stroke-width="1"/>
<circle cx="10.7" cy="11.3" r="4" fill="url(#gbadge)"/>
<path d="M8.7 11.2 L10 12.6 L12.7 10" stroke="#e8ffe8" stroke-width="1" fill="none"/></svg>
<div class="a" style="left:20px;top:684px;width:9px;height:9px;border:1px solid #a3a3a3;background:linear-gradient(#f6f6f6,#dcdcdc);"></div><div class="a" style="left:22px;top:688px;width:5px;height:1px;background:#222;"></div>
<div class="a" style="left:56px;top:680.0px;height:16px;line-height:16px;font-size:12px;color:#000;font-weight:bold;letter-spacing:0.173px;font-family:'Liberation Sans';white-space:pre;">OSD Succeded</div>
<div class="a" style="left:45px;top:704px;width:9px;height:1px;background:repeating-linear-gradient(to right,#a0a0a0 0 1px,transparent 1px 2px);"></div>
<svg class="a" style="left:54px;top:696px" width="16" height="16" viewBox="0 0 16 16">
<circle cx="8" cy="8" r="7.4" fill="#d2d2d2" stroke="#a6a6a6" stroke-width="0.9"/>
<circle cx="8" cy="8" r="6.5" fill="url(#gck)"/>
<path d="M4.8 8.9 L7.1 12.3 L11.2 3.9" stroke="#fbf4fb" stroke-width="2" fill="none"/></svg>
<div class="a" style="left:75px;top:696.0px;height:16px;line-height:16px;font-size:11px;color:#000;font-weight:normal;letter-spacing:-0.2px;font-family:'Liberation Sans';white-space:pre;">Get Mail Info</div>
<div class="a" style="left:45px;top:720px;width:9px;height:1px;background:repeating-linear-gradient(to right,#a0a0a0 0 1px,transparent 1px 2px);"></div>
<svg class="a" style="left:54px;top:712px" width="16" height="16" viewBox="0 0 16 16">
<circle cx="8" cy="8" r="7.4" fill="#d2d2d2" stroke="#a6a6a6" stroke-width="0.9"/>
<circle cx="8" cy="8" r="6.5" fill="url(#gck)"/>
<path d="M4.8 8.9 L7.1 12.3 L11.2 3.9" stroke="#fbf4fb" stroke-width="2" fill="none"/></svg>
<div class="a" style="left:75px;top:712.0px;height:16px;line-height:16px;font-size:11px;color:#000;font-weight:normal;letter-spacing:-0.25px;font-family:'Liberation Sans';white-space:pre;">Send mail</div>
<div class="a" style="left:265px;top:103px;width:17px;height:613px;background:#fff;"></div>
<div class="a" style="left:265px;top:103px;width:1px;height:613px;background:#dcdcdc;"></div>
<div class="a" style="left:281px;top:103px;width:1px;height:613px;background:#dcdcdc;"></div>
<div class="a" style="left:265px;top:104px;width:17px;height:17px;background:#fff;box-shadow:inset 0 0 0 1px #c6c6c6;"></div>
<svg class="a" style="left:265px;top:104px" width="17" height="17" viewBox="0 0 17 17"><path d="M5 11.5 L8.5 7.8 L12 11.5" stroke="#656565" stroke-width="1.35" fill="none"/></svg>
<div class="a" style="left:265px;top:645px;width:17px;height:38px;background:#dadada;box-shadow:inset 0 0 0 1px #a8a8a8;"></div>
<div class="a" style="left:270px;top:660px;width:7px;height:2px;background:#606060;"></div>
<div class="a" style="left:270px;top:663px;width:7px;height:2px;background:#606060;"></div>
<div class="a" style="left:270px;top:666px;width:7px;height:2px;background:#606060;"></div>
<div class="a" style="left:265px;top:699px;width:17px;height:17px;background:#fff;box-shadow:inset 0 0 0 1px #c6c6c6;"></div>
<svg class="a" style="left:265px;top:699px" width="17" height="17" viewBox="0 0 17 17"><path d="M5 6.3 L8.5 10.2 L12 6.3" stroke="#656565" stroke-width="1.35" fill="none"/></svg>
<div class="a" style="left:16px;top:716px;width:249px;height:17px;background:#fff;"></div>
<div class="a" style="left:16px;top:716px;width:249px;height:1px;background:#dcdcdc;"></div>
<div class="a" style="left:16px;top:732px;width:249px;height:1px;background:#dcdcdc;"></div>
<div class="a" style="left:16px;top:716px;width:17px;height:17px;background:#fff;box-shadow:inset 0 0 0 1px #c6c6c6;"></div>
<svg class="a" style="left:16px;top:716px" width="17" height="17" viewBox="0 0 17 17"><path d="M10.5 5 L6.8 8.5 L10.5 12" stroke="#656565" stroke-width="1.35" fill="none"/></svg>
<div class="a" style="left:55px;top:716px;width:136px;height:17px;background:#dadada;box-shadow:inset 0 0 0 1px #a8a8a8;"></div>
<div class="a" style="left:119px;top:721px;width:2px;height:7px;background:#606060;"></div>
<div class="a" style="left:122px;top:721px;width:2px;height:7px;background:#606060;"></div>
<div class="a" style="left:125px;top:721px;width:2px;height:7px;background:#606060;"></div>
<div class="a" style="left:248px;top:716px;width:17px;height:17px;background:#fff;box-shadow:inset 0 0 0 1px #c6c6c6;"></div>
<svg class="a" style="left:248px;top:716px" width="17" height="17" viewBox="0 0 17 17"><path d="M6.2 5.2 L9.9 8.6 L6.2 12" stroke="#656565" stroke-width="1.35" fill="none"/></svg>
<div class="a" style="left:265px;top:716px;width:17px;height:18px;background:#f0f0f0;"></div>
<div class="a" style="left:18px;top:105px;width:206px;height:1px;background:#76706e;"></div><div class="a" style="left:14px;top:101px;width:214px;height:53px;box-sizing:border-box;border:4px solid #3fa3c9;border-radius:2px;"></div>
<div class="a" style="left:17px;top:738.0px;height:16px;line-height:16px;font-size:11px;color:#000;font-weight:normal;letter-spacing:-0.2px;font-family:'Liberation Sans';white-space:pre;">No Results</div>
<div class="a" style="left:289px;top:51px;width:649px;height:688px;background:#fff;box-shadow:inset 0 0 0 1px #a0a0a0;"></div>
<div class="a" style="left:293px;top:55px;width:641px;height:680px;background:#f0f0f0;"></div>
<div class="a" style="left:351px;top:33px;width:47px;height:19px;background:#f0f0f0;box-shadow:inset 0 0 0 1px #a0a0a0;"></div>
<div class="a" style="left:289px;top:31px;width:63px;height:22px;background:#fff;border:1px solid #a0a0a0;border-bottom:none;"></div>
<div class="a" style="left:297px;top:33.0px;height:16px;line-height:16px;font-size:11px;color:#000;font-weight:normal;letter-spacing:-0.333px;font-family:'Liberation Sans';white-space:pre;">Properties</div>
<div class="a" style="left:356px;top:35.0px;height:16px;line-height:16px;font-size:11px;color:#000;font-weight:normal;letter-spacing:-0.383px;font-family:'Liberation Sans';white-space:pre;">Options</div>
<div class="a" style="left:309px;top:60.0px;height:16px;line-height:16px;font-size:11px;color:#000;font-weight:normal;letter-spacing:0.0px;font-family:'Liberation Sans';white-space:pre;">Type:</div>
<div class="a" style="left:425px;top:59px;width:494px;height:20px;background:#f0f0f0;box-shadow:inset 0 0 0 1px #7a7a7a;"></div>
<div class="a" style="left:428px;top:61.0px;height:16px;line-height:16px;font-size:11px;color:#000;font-weight:normal;letter-spacing:-0.347px;font-family:'Liberation Sans';white-space:pre;">Run Command Line</div>
<div class="a" style="left:309px;top:85.0px;height:16px;line-height:16px;font-size:11px;color:#000;font-weight:normal;letter-spacing:-0.375px;font-family:'Liberation Sans';white-space:pre;">Name:</div>
<div class="a" style="left:425px;top:85px;width:494px;height:20px;background:#fff;box-shadow:inset 0 0 0 1px #7a7a7a;"></div>
<div class="a" style="left:428px;top:87.0px;height:16px;line-height:16px;font-size:11px;color:#000;font-weight:normal;letter-spacing:-0.193px;font-family:'Liberation Sans';white-space:pre;">Set default Apps per extension</div>
<div class="a" style="left:309px;top:112.0px;height:16px;line-height:16px;font-size:11px;color:#000;font-weight:normal;letter-spacing:-0.164px;font-family:'Liberation Sans';white-space:pre;">Description:</div>
<div class="a" style="left:425px;top:111px;width:494px;height:40px;background:#fff;box-shadow:inset 0 0 0 1px #7a7a7a;"></div>
<div class="a" style="left:900px;top:113px;width:17px;height:36px;background:#fff;box-shadow:inset 0 0 0 1px #d4d4d4;"></div>
<div class="a" style="left:900px;top:113px;width:17px;height:17px;background:#fff;box-shadow:inset 0 0 0 1px #c6c6c6;"></div>
<svg class="a" style="left:900px;top:113px" width="17" height="17" viewBox="0 0 17 17"><path d="M5 11.5 L8.5 7.8 L12 11.5" stroke="#656565" stroke-width="1.35" fill="none"/></svg>
<div class="a" style="left:900px;top:132px;width:17px;height:17px;background:#fff;box-shadow:inset 0 0 0 1px #c6c6c6;"></div>
<svg class="a" style="left:900px;top:132px" width="17" height="17" viewBox="0 0 17 17"><path d="M5 6.3 L8.5 10.2 L12 6.3" stroke="#656565" stroke-width="1.35" fill="none"/></svg>
<div class="a" style="left:305px;top:157px;width:617px;height:1px;background:#a0a0a0;"></div>
<div class="a" style="left:305px;top:158px;width:617px;height:1px;background:#fff;"></div>
<div class="a" style="left:305px;top:166.0px;height:16px;line-height:16px;font-size:11px;color:#000;font-weight:normal;letter-spacing:-0.25px;font-family:'Liberation Sans';white-space:pre;">Command line:</div>
<div class="a" style="left:305px;top:190px;width:599px;height:246px;background:#fff;box-shadow:inset 0 0 0 1px #2f69a3;"></div>
<div class="a" style="left:885px;top:192px;width:17px;height:242px;background:#fff;"></div>
<div class="a" style="left:885px;top:192px;width:1px;height:242px;background:#dadada;"></div>
<div class="a" style="left:901px;top:192px;width:1px;height:242px;background:#dadada;"></div>
<div class="a" style="left:885px;top:192px;width:17px;height:17px;background:#fff;box-shadow:inset 0 0 0 1px #c6c6c6;"></div>
<svg class="a" style="left:885px;top:192px" width="17" height="17" viewBox="0 0 17 17"><path d="M5 11.5 L8.5 7.8 L12 11.5" stroke="#656565" stroke-width="1.35" fill="none"/></svg>
<div class="a" style="left:885px;top:417px;width:17px;height:17px;background:#fff;box-shadow:inset 0 0 0 1px #c6c6c6;"></div>
<svg class="a" style="left:885px;top:417px" width="17" height="17" viewBox="0 0 17 17"><path d="M5 6.3 L8.5 10.2 L12 6.3" stroke="#656565" stroke-width="1.35" fill="none"/></svg>
<div class="a" style="left:311px;top:193.0px;height:16px;line-height:16px;font-size:11.7px;color:#000;font-weight:normal;letter-spacing:0px;font-family:'Liberation Mono';white-space:pre;">dism.exe /online /import-defaultappassociations:.\defaultapps.xml</div>
<div class="a" style="left:766px;top:192px;width:1px;height:16px;background:#000;"></div>
<div class="a" style="left:303px;top:452.0px;height:16px;line-height:16px;font-size:11px;color:#000;font-weight:normal;letter-spacing:-0.094px;font-family:'Liberation Sans';white-space:pre;">Output to task sequence variable:</div>
<div class="a" style="left:578px;top:452px;width:324px;height:20px;background:#fff;box-shadow:inset 0 0 0 1px #7a7a7a;"></div>
<div class="a" style="left:302px;top:485px;width:13px;height:13px;background:#fff;border:1px solid #666;"></div>
<div class="a" style="left:321px;top:483.0px;height:16px;line-height:16px;font-size:11px;color:#000;font-weight:normal;letter-spacing:-0.254px;font-family:'Liberation Sans';white-space:pre;">Disable 64-bit file system redirection</div>
<div class="a" style="left:301px;top:521.0px;height:16px;line-height:16px;font-size:11px;color:#000;font-weight:normal;letter-spacing:-0.037px;font-family:'Liberation Sans';white-space:pre;">Start in:</div>
<div class="a" style="left:378px;top:519px;width:433px;height:20px;background:#fff;box-shadow:inset 0 0 0 1px #7a7a7a;"></div>
<div class="a" style="left:830px;top:518px;width:88px;height:21px;background:#e1e1e1;box-shadow:inset 0 0 0 1px #7a7a7a;"></div><div class="a" style="left:830px;top:520.5px;width:88px;height:16px;line-height:16px;text-align:center;font-size:11px;color:#000;letter-spacing:-0.125px;white-space:pre;">Browse...</div>
<div class="a" style="left:303px;top:550px;width:13px;height:13px;background:#fff;border:1px solid #666;"></div><svg class="a" style="left:303px;top:550px" width="13" height="13" viewBox="0 0 13 13"><path d="M3.3 5.9 L6 9.3 L10.3 3.4" stroke="#000" stroke-width="2.2" fill="none"/></svg>
<div class="a" style="left:322px;top:549.0px;height:16px;line-height:16px;font-size:11px;color:#000;font-weight:normal;letter-spacing:0.2px;font-family:'Liberation Sans';white-space:pre;">Package:</div>
<div class="a" style="left:320px;top:571px;width:490px;height:20px;background:#f0f0f0;box-shadow:inset 0 0 0 1px #7a7a7a;"></div>
<div class="a" style="left:323px;top:573.0px;height:16px;line-height:16px;font-size:11px;color:#000;font-weight:normal;letter-spacing:-0.248px;font-family:'Liberation Sans';white-space:pre;">AGB0031A, Default_Apps</div>
<div class="a" style="left:831px;top:571px;width:88px;height:21px;background:#e1e1e1;box-shadow:inset 0 0 0 1px #7a7a7a;"></div><div class="a" style="left:831px;top:573.5px;width:88px;height:16px;line-height:16px;text-align:center;font-size:11px;color:#000;letter-spacing:-0.125px;white-space:pre;">Browse...</div>
<div class="a" style="left:302px;top:604px;width:13px;height:13px;background:#fff;border:1px solid #666;"></div>
<div class="a" style="left:321px;top:603.0px;height:16px;line-height:16px;font-size:11px;color:#000;font-weight:normal;letter-spacing:-0.35px;font-family:'Liberation Sans';white-space:pre;">Time-out (minutes):</div>
<div class="a" style="left:731px;top:600px;width:78px;height:20px;background:#f0f0f0;box-shadow:inset 0 0 0 1px #7a7a7a;"></div>
<div class="a" style="left:733px;top:601.0px;height:16px;line-height:16px;font-size:11px;color:#8a8a8a;font-weight:normal;letter-spacing:0.3px;font-family:'Liberation Sans';white-space:pre;">15</div>
<div class="a" style="left:792px;top:601px;width:16px;height:9px;background:#f0f0f0;box-shadow:inset 0 0 0 1px #d0d0d0;"></div>
<div class="a" style="left:792px;top:610px;width:16px;height:9px;background:#f0f0f0;box-shadow:inset 0 0 0 1px #d0d0d0;"></div>
<svg class="a" style="left:795px;top:602px" width="10" height="7" viewBox="0 0 10 7"><path d="M1.5 5 L5 1.8 L8.5 5" stroke="#555" stroke-width="1" fill="none"/></svg>
<svg class="a" style="left:795px;top:611px" width="10" height="7" viewBox="0 0 10 7"><path d="M1.5 2 L5 5.2 L8.5 2" stroke="#555" stroke-width="1" fill="none"/></svg>
<div class="a" style="left:301px;top:631px;width:13px;height:13px;background:#fff;border:1px solid #666;"></div>
<div class="a" style="left:320px;top:630.0px;height:16px;line-height:16px;font-size:11px;color:#000;font-weight:normal;letter-spacing:-0.151px;font-family:'Liberation Sans';white-space:pre;">Run this step as the following account</div>
<div class="a" style="left:321px;top:656.0px;height:16px;line-height:16px;font-size:11px;color:#000;font-weight:normal;letter-spacing:0.029px;font-family:'Liberation Sans';white-space:pre;">Account:</div>
<div class="a" style="left:402px;top:653px;width:407px;height:20px;background:#f0f0f0;box-shadow:inset 0 0 0 1px #7a7a7a;"></div>
<div class="a" style="left:829px;top:653px;width:88px;height:21px;background:#f4f4f4;box-shadow:inset 0 0 0 1px #bfbfbf;"></div><div class="a" style="left:829px;top:655.5px;width:88px;height:16px;line-height:16px;text-align:center;font-size:11px;color:#a3a3a3;letter-spacing:0.04px;white-space:pre;">Set...</div>
<div class="a" style="left:303px;top:56px;width:617px;height:1px;background:#76706e;"></div><div class="a" style="left:299px;top:52px;width:625px;height:59px;box-sizing:border-box;border:4px solid #3fa3c9;border-radius:2px;"></div>
<div class="a" style="left:303px;top:165px;width:473px;height:1px;background:#76706e;"></div><div class="a" style="left:299px;top:161px;width:481px;height:53px;box-sizing:border-box;border:4px solid #3fa3c9;border-radius:2px;"></div>
<div class="a" style="left:301px;top:547px;width:510px;height:1px;background:#76706e;"></div><div class="a" style="left:297px;top:543px;width:518px;height:54px;box-sizing:border-box;border:4px solid #3fa3c9;border-radius:2px;"></div>
<div class="a" style="left:665px;top:744px;width:84px;height:24px;background:#e1e1e1;box-shadow:inset 0 0 0 1px #7a7a7a;"></div><div class="a" style="left:665px;top:748.0px;width:84px;height:16px;line-height:16px;text-align:center;font-size:12px;color:#000;letter-spacing:-0.6px;white-space:pre;">OK</div>
<div class="a" style="left:759px;top:744px;width:84px;height:24px;background:#e1e1e1;box-shadow:inset 0 0 0 1px #7a7a7a;"></div><div class="a" style="left:759px;top:748.0px;width:84px;height:16px;line-height:16px;text-align:center;font-size:12px;color:#000;letter-spacing:-0.44px;white-space:pre;">Cancel</div>
<div class="a" style="left:853px;top:744px;width:84px;height:24px;background:#e1e1e1;box-shadow:inset 0 0 0 1px #7a7a7a;"></div><div class="a" style="left:853px;top:748.0px;width:84px;height:16px;line-height:16px;text-align:center;font-size:12px;color:#000;letter-spacing:-0.6px;white-space:pre;">Apply</div>
</body></html>
